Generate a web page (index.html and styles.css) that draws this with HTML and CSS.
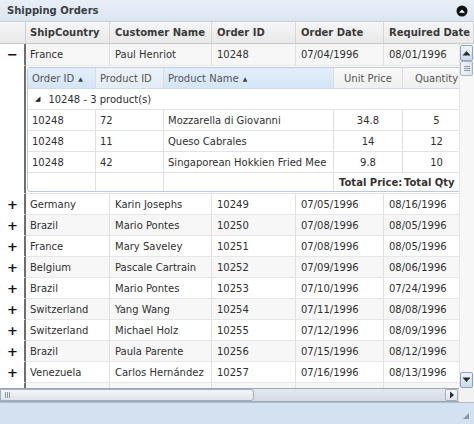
FILE: index.html
```html
<!DOCTYPE html>
<html>
<head>
<meta charset="utf-8">
<link rel="stylesheet" href="styles.css">
</head>
<body>
<div class="widget">
  <div class="titlebar">
    <span class="title">Shipping Orders</span>
    <svg class="collapse" width="12" height="12" viewBox="-6 -6 12 12"><circle r="5.5" fill="#111"/><path d="M-3 1.8 L0 -1.4 L3 1.8 Z" fill="#fff"/></svg>
  </div>
  <div class="head grid-cols">
    <div class="hc exp"></div>
    <div class="hc">ShipCountry</div>
    <div class="hc">Customer Name</div>
    <div class="hc">Order ID</div>
    <div class="hc">Order Date</div>
    <div class="hc">Required Date</div>
  </div>
  <div class="body">
    <div class="rows">
      <div class="row grid-cols first alt">
        <div class="c exp">&minus;</div>
        <div class="c">France</div><div class="c">Paul Henriot</div><div class="c">10248</div><div class="c">07/04/1996</div><div class="c">08/01/1996</div>
      </div>
      <div class="row grid-cols detail-row">
        <div class="c exp"></div>
        <div class="detail-cell">
          <div class="detail">
            <div class="dh dcols">
              <div class="dhc sorted">Order ID <span class="arr">&#9650;</span></div>
              <div class="dhc mid">Product ID</div>
              <div class="dhc sorted">Product Name <span class="arr">&#9650;</span></div>
              <div class="dhc center">Unit Price</div>
              <div class="dhc center">Quantity</div>
            </div>
            <div class="group"><span class="tri">&#9698;</span>10248 - 3 product(s)</div>
            <div class="dr dcols">
              <div class="dc">10248</div><div class="dc">72</div><div class="dc">Mozzarella di Giovanni</div><div class="dc center">34.8</div><div class="dc center">5</div>
            </div>
            <div class="dr dcols">
              <div class="dc">10248</div><div class="dc">11</div><div class="dc">Queso Cabrales</div><div class="dc center">14</div><div class="dc center">12</div>
            </div>
            <div class="dr dcols">
              <div class="dc">10248</div><div class="dc">42</div><div class="dc">Singaporean Hokkien Fried Mee</div><div class="dc center">9.8</div><div class="dc center">10</div>
            </div>
            <div class="df dcols">
              <div class="dc"></div><div class="dc"></div><div class="dc"></div><div class="dc b nb">Total Price:</div><div class="dc b nb">Total Qty</div>
            </div>
          </div>
        </div>
      </div>
      <div class="row grid-cols"><div class="c exp">+</div><div class="c">Germany</div><div class="c">Karin Josephs</div><div class="c">10249</div><div class="c">07/05/1996</div><div class="c">08/16/1996</div></div>
      <div class="row grid-cols alt"><div class="c exp">+</div><div class="c">Brazil</div><div class="c">Mario Pontes</div><div class="c">10250</div><div class="c">07/08/1996</div><div class="c">08/05/1996</div></div>
      <div class="row grid-cols"><div class="c exp">+</div><div class="c">France</div><div class="c">Mary Saveley</div><div class="c">10251</div><div class="c">07/08/1996</div><div class="c">08/05/1996</div></div>
      <div class="row grid-cols alt"><div class="c exp">+</div><div class="c">Belgium</div><div class="c">Pascale Cartrain</div><div class="c">10252</div><div class="c">07/09/1996</div><div class="c">08/06/1996</div></div>
      <div class="row grid-cols"><div class="c exp">+</div><div class="c">Brazil</div><div class="c">Mario Pontes</div><div class="c">10253</div><div class="c">07/10/1996</div><div class="c">07/24/1996</div></div>
      <div class="row grid-cols alt"><div class="c exp">+</div><div class="c">Switzerland</div><div class="c">Yang Wang</div><div class="c">10254</div><div class="c">07/11/1996</div><div class="c">08/08/1996</div></div>
      <div class="row grid-cols"><div class="c exp">+</div><div class="c">Switzerland</div><div class="c">Michael Holz</div><div class="c">10255</div><div class="c">07/12/1996</div><div class="c">08/09/1996</div></div>
      <div class="row grid-cols alt"><div class="c exp">+</div><div class="c">Brazil</div><div class="c">Paula Parente</div><div class="c">10256</div><div class="c">07/15/1996</div><div class="c">08/12/1996</div></div>
      <div class="row grid-cols"><div class="c exp">+</div><div class="c">Venezuela</div><div class="c">Carlos Hernández</div><div class="c">10257</div><div class="c">07/16/1996</div><div class="c">08/13/1996</div></div>
      <div class="row grid-cols alt"><div class="c exp"></div><div class="c"></div><div class="c"></div><div class="c"></div><div class="c"></div><div class="c"></div></div>
    </div>
    <div class="vscroll">
      <div class="sbtn"><svg width="9" height="6" viewBox="0 0 9 6"><path d="M0.5 5.5 L4.5 1 L8.5 5.5 Z" fill="#2b2b2b"/></svg></div>
      <div class="vthumb"><span></span><span></span><span></span></div>
      <div class="vtrack"></div>
      <div class="sbtn"><svg width="9" height="6" viewBox="0 0 9 6"><path d="M0.5 0.5 L4.5 5 L8.5 0.5 Z" fill="#2b2b2b"/></svg></div>
    </div>
  </div>
  <div class="hscroll">
    <div class="hbar">
      <div class="hthumb"><span></span><span></span><span></span></div>
      <div class="htrack"></div>
      <div class="hbtn"><svg width="6" height="8" viewBox="0 0 6 8"><path d="M1 0.5 L5 4 L1 7.5 Z" fill="#2b2b2b"/></svg></div>
    </div>
    <div class="corner"></div>
  </div>
  <div class="footer">
    <svg class="grip" width="8" height="8" viewBox="0 0 8 8"><path d="M7 1 L7 7 L1 7 Z" fill="#8a97a8"/></svg>
  </div>
</div>
</body>
</html>
```
FILE: styles.css
```css
* { box-sizing: border-box; }
html, body { margin: 0; padding: 0; background: #fff; }
body {
  font-family: "DejaVu Sans", Verdana, sans-serif;
  font-size: 10px;
  color: #2f2f2f;
}
.widget {
  width: 474px;
  height: 424px;
  display: flex;
  flex-direction: column;
  overflow: hidden;
  background: #fff;
}
.titlebar {
  height: 22px;
  flex: none;
  display: flex;
  align-items: center;
  justify-content: space-between;
  padding: 0 6px 0 7px;
  background: linear-gradient(#e9eff7, #dbe5f1);
  border-bottom: 1px solid #c3d0df;
}
.title { font-weight: bold; color: #3c3f44; }
.collapse { display: block; margin-top: 1px; }

.grid-cols {
  display: grid;
  grid-template-columns: 26px 84px 102px 84px 88px 90px;
  width: 474px;
}
.head {
  height: 22px;
  flex: none;
  background: linear-gradient(#f6f6f6, #e9e9e9);
  border-bottom: 1px solid #c9c9c9;
}
.hc {
  font-weight: bold;
  color: #3a3a3a;
  padding: 0 4px;
  display: flex;
  align-items: center;
  border-right: 1px solid #d6d6d6;
  white-space: nowrap;
  overflow: hidden;
}
.hc:nth-child(n+3) { padding-left: 5px; }
.hc.exp { border-right: 1px solid #d0d0d0; }

.body {
  height: 344px;
  flex: none;
  display: flex;
}
.rows {
  width: 459px;
  overflow: hidden;
  flex: none;
}
.row { height: 21px; }
.row.first { height: 22px; }
.c {
  padding: 0 4px;
  display: flex;
  align-items: center;
  border-right: 1px solid #e0e0e0;
  border-bottom: 1px solid #e6e6e6;
  white-space: nowrap;
  overflow: hidden;
  background: #fff;
}
.c:nth-child(n+3) { padding-left: 5px; }
.row.alt .c { background: #f7f7f7; }
.c.exp, .row.alt .c.exp {
  background: #fff;
  border-right: 2px solid #6e6e6e;
  border-bottom: 1px solid #fff;
  justify-content: center;
  padding: 0 0 0 1px;
  font-weight: bold;
  font-size: 13px;
  color: #111;
}

.detail-row { height: 128px; }
.detail-cell {
  grid-column: 2 / 7;
  padding: 1px 0 1px 1px;
  border-bottom: 1px solid #e2e2e2;
  overflow: hidden;
}
.detail {
  width: 445px;
  height: 125px;
  border: 1px solid #b9cadc;
  border-radius: 3px;
  background: #fff;
  overflow: hidden;
}
.dcols {
  display: grid;
  grid-template-columns: 68px 68px 170px 69px 68px;
}
.dh { height: 21px; border-bottom: 1px solid #d3dce6; }
.dhc {
  display: flex;
  align-items: center;
  padding: 0 4px;
  color: #555;
  border-right: 1px solid #d9dee5;
  background: linear-gradient(#f9f9f9, #efefef);
  white-space: nowrap;
  overflow: hidden;
}
.dhc.sorted { background: linear-gradient(#e3eefa, #d4e5f7); }
.dhc.mid { background: linear-gradient(#eef3f9, #e3ebf4); }
.dhc.center { justify-content: center; }
.arr { font-size: 6px; margin-left: 4px; color: #444; }
.group {
  height: 21px;
  display: flex;
  align-items: center;
  padding-left: 7px;
  border-bottom: 1px solid #e3e3e3;
}
.tri { font-size: 7px; margin-right: 8px; color: #222; }
.dr { height: 21px; }
.dc {
  display: flex;
  align-items: center;
  padding: 0 4px;
  border-right: 1px solid #e0e0e0;
  border-bottom: 1px solid #e3e3e3;
  white-space: nowrap;
  overflow: hidden;
}
.dc.center { justify-content: center; }
.df { height: 18px; }
.df .dc { border-bottom: none; }
.dc.b { font-weight: bold; color: #333; }
.dc.nb { border-right: none; overflow: visible; padding-left: 5px; }
.dc.nb:last-child { padding-left: 1px; }

.vscroll {
  width: 15px;
  flex: none;
  display: flex;
  flex-direction: column;
  background: #f7f7f7;
  border-left: 1px solid #e6e6e6;
  padding: 1px 1px 0 0;
}
.sbtn {
  height: 16px;
  flex: none;
  border: 1px solid #8ea3bd;
  border-radius: 2px;
  background: linear-gradient(#f1f5fa, #cbd9ea);
  display: flex;
  align-items: center;
  justify-content: center;
}
.vthumb {
  height: 15px;
  flex: none;
  border: 1px solid #a9b6c6;
  border-radius: 2px;
  background: linear-gradient(90deg, #f3f5f8, #dde3ea);
  display: flex;
  flex-direction: column;
  justify-content: center;
  align-items: center;
  gap: 1px;
}
.vthumb span { display: block; width: 6px; height: 1px; background: #8b97a6; }
.vtrack { flex: 1; }

.hscroll {
  height: 14px;
  flex: none;
  display: flex;
}
.hbar {
  width: 459px;
  display: flex;
  align-items: center;
  background: linear-gradient(#e4e8ee, #d5dbe3);
  border-top: 1px solid #9ea8b4;
  border-bottom: 1px solid #9ea8b4;
}
.hthumb {
  width: 254px;
  height: 12px;
  border: 1px solid #a3aebb;
  border-radius: 0 3px 3px 0;
  background: linear-gradient(#f4f6f9, #dfe4ea);
  display: flex;
  align-items: center;
  padding-left: 4px;
  gap: 1px;
}
.hthumb span { display: block; width: 1px; height: 6px; background: #8b97a6; }
.htrack { flex: 1; }
.hbtn {
  width: 13px;
  height: 12px;
  margin-right: 1px;
  border: 1px solid #a3aebb;
  border-radius: 2px;
  background: linear-gradient(#f4f6f9, #dfe4ea);
  display: flex;
  align-items: center;
  justify-content: center;
}
.corner { width: 15px; background: #f2f2f2; }

.footer {
  height: 22px;
  flex: none;
  background: #d4e1f1;
  border-top: 1px solid #aebdd0;
  display: flex;
  justify-content: flex-end;
  align-items: flex-end;
  padding: 0 4px 4px 0;
}
.grip { display: block; }
```
